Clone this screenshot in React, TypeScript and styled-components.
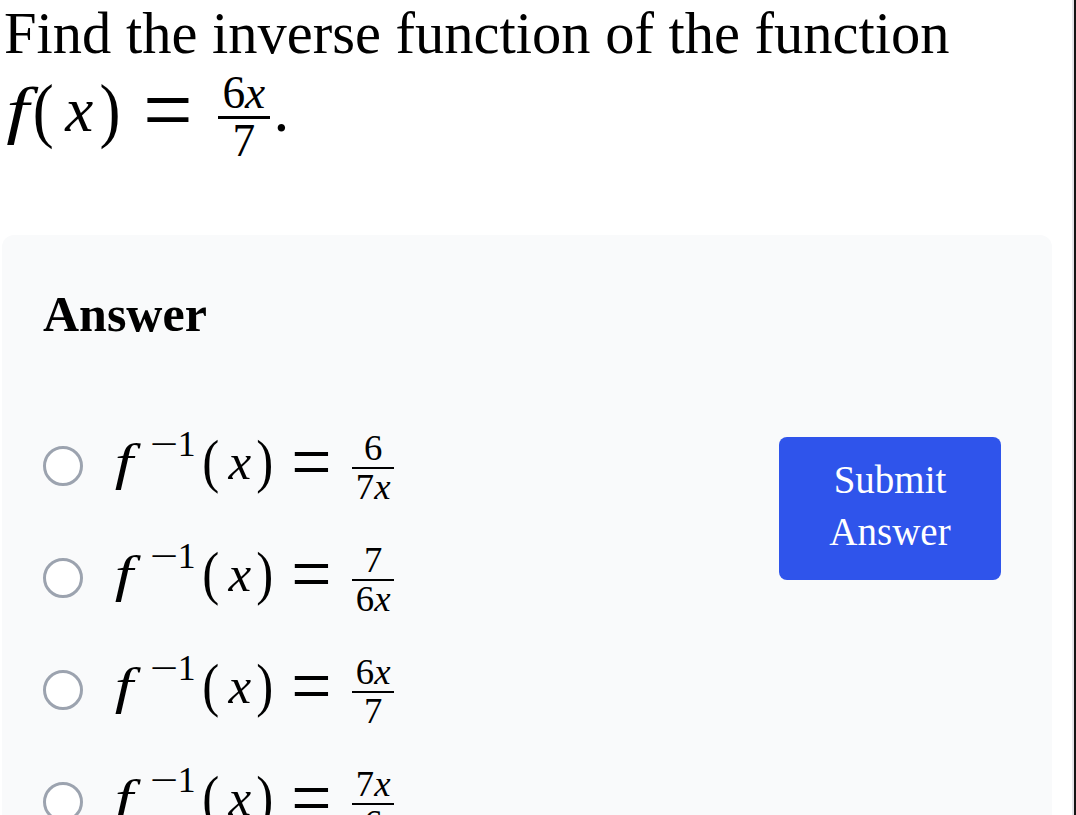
import React from "react";
import styled, { createGlobalStyle } from "styled-components";

const GlobalStyle = createGlobalStyle`
    html, body {
        margin: 0;
        padding: 0;
        overflow: hidden;
        background: #fff;
    }
    body {
        font-family: "Liberation Serif", "Times New Roman", serif;
        color: #000;
    }
`;

interface Choice {
    id: string;
    num: string;
    den: string;
}

const choices: Choice[] = [
    { id: "a", num: "6", den: "7x" },
    { id: "b", num: "7", den: "6x" },
    { id: "c", num: "6x", den: "7" },
    { id: "d", num: "7x", den: "6" },
];

// letters are set as math italics, digits upright
const term = (text: string) =>
    text.split("").map((ch, i) =>
        /[a-z]/.test(ch) ? <Var key={i}>{ch}</Var> : <span key={i}>{ch}</span>
    );

const Fraction = ({ num, den }: { num: string; den: string }) => (
    <Frac>
        <FracPart>{term(num)}</FracPart>
        <FracBar />
        <FracPart>{term(den)}</FracPart>
    </Frac>
);

const Equation = ({ inverse, num, den }: { inverse?: boolean; num: string; den: string }) => (
    <>
        <Fn>f</Fn>
        {inverse && (
            <Sup>
                <SupMinus>−</SupMinus>1
            </Sup>
        )}
        <Open>(</Open>
        <Var>x</Var>
        <Close>)</Close>
        <Rel>
            <RelGlyph>=</RelGlyph>
        </Rel>
        <Fraction num={num} den={den} />
    </>
);

export default function App() {
    return (
        <>
            <GlobalStyle />
            <Page>
                <Main>
                    <Question>
                        Find the inverse function of the function{" "}
                        <MathText $size={63}>
                            <Equation num="6x" den="7" />
                            <Period>.</Period>
                        </MathText>
                    </Question>
                    <Panel>
                        <Heading>Answer</Heading>
                        <Body>
                            <Options>
                                {choices.map((c) => (
                                    <Option key={c.id}>
                                        <Radio name="answer" value={c.id} />
                                        <MathText $size={51}>
                                            <Equation inverse num={c.num} den={c.den} />
                                        </MathText>
                                    </Option>
                                ))}
                            </Options>
                            <SubmitButton type="button">Submit Answer</SubmitButton>
                        </Body>
                    </Panel>
                </Main>
                <Edge />
            </Page>
        </>
    );
}

const Page = styled.div`
    display: flex;
    min-height: 100vh;
`;

const Main = styled.main`
    flex: 1;
    padding: 0 20px 0 2px;
`;

const Edge = styled.div`
    flex: none;
    width: 2px;
    border-left: 2px solid #e4e4e9;
    background: #151515;
`;

const Question = styled.h1`
    margin: -4px 0 71px 2px;
    font-size: 58.5px;
    font-weight: 400;
    line-height: 75px;
`;

const Panel = styled.section`
    background: #f9fafb;
    border-radius: 12px;
    padding: 49px 40px 40px 41px;
`;

const Heading = styled.h2`
    margin: 0 0 66px;
    font-size: 50px;
    font-weight: 700;
    line-height: 60px;
`;

const Body = styled.div`
    display: flex;
    align-items: flex-start;
`;

const Options = styled.div`
    flex: 1;
    display: flex;
    flex-direction: column;
`;

const Option = styled.label`
    display: flex;
    align-items: center;
    gap: 30px;
    height: 112px;
    cursor: pointer;
`;

const Radio = styled.input.attrs({ type: "radio" })`
    appearance: none;
    flex: none;
    margin: 0;
    width: 40px;
    height: 40px;
    border: 3px solid #9ca3af;
    border-radius: 50%;
    background: #fff;
`;

const SubmitButton = styled.button`
    flex: none;
    width: 222px;
    height: 143px;
    margin: 27px 11px 0 0;
    padding: 0 24px 5px;
    border: none;
    border-radius: 8px;
    background: #2f54eb;
    color: #fff;
    font-family: "Liberation Serif", "Times New Roman", serif;
    font-size: 39px;
    line-height: 52px;
    cursor: pointer;
`;

/* math typesetting */

const MathText = styled.span<{ $size: number }>`
    display: inline-block;
    padding-left: 0.08em;
    font-family: "Liberation Serif", "Times New Roman", serif;
    font-size: ${(p) => p.$size}px;
    font-weight: 400;
    line-height: 1;
    white-space: nowrap;
`;

const Var = styled.i`
    font-style: italic;
`;

const Fn = styled(Var)`
    display: inline-block;
    margin-right: 0.1em;
    transform: scaleX(1.3);
`;

const Open = styled.span`
    display: inline-block;
    transform: scaleY(1.15);
    margin-right: 0.18em;
`;

const Close = styled.span`
    display: inline-block;
    transform: scaleY(1.15);
    margin-left: 0.1em;
`;

const Rel = styled.span`
    display: inline-block;
    width: 0.778em;
    margin: 0 0.29em 0 0.36em;
    text-align: center;
`;

const RelGlyph = styled.span`
    display: inline-block;
    transform: scale(1.4, 1.55);
`;

const Sup = styled.span`
    display: inline-block;
    margin: 0 0.19em 0 0.38em;
    font-size: 0.7em;
    vertical-align: 0.64em;
`;

const SupMinus = styled.span`
    display: inline-block;
    width: 0.778em;
    text-align: center;
    transform: scaleX(1.4);
`;

const Frac = styled.span`
    display: inline-flex;
    flex-direction: column;
    align-items: stretch;
    padding: 0 0.06em 0 0.12em;
    vertical-align: 0.36em;
`;

const FracPart = styled.span`
    padding: 0 0.1em;
    font-size: 0.72em;
    line-height: 1;
    text-align: center;
`;

const FracBar = styled.span`
    height: 0.04em;
    background: currentColor;
`;

const Period = styled.span``;
